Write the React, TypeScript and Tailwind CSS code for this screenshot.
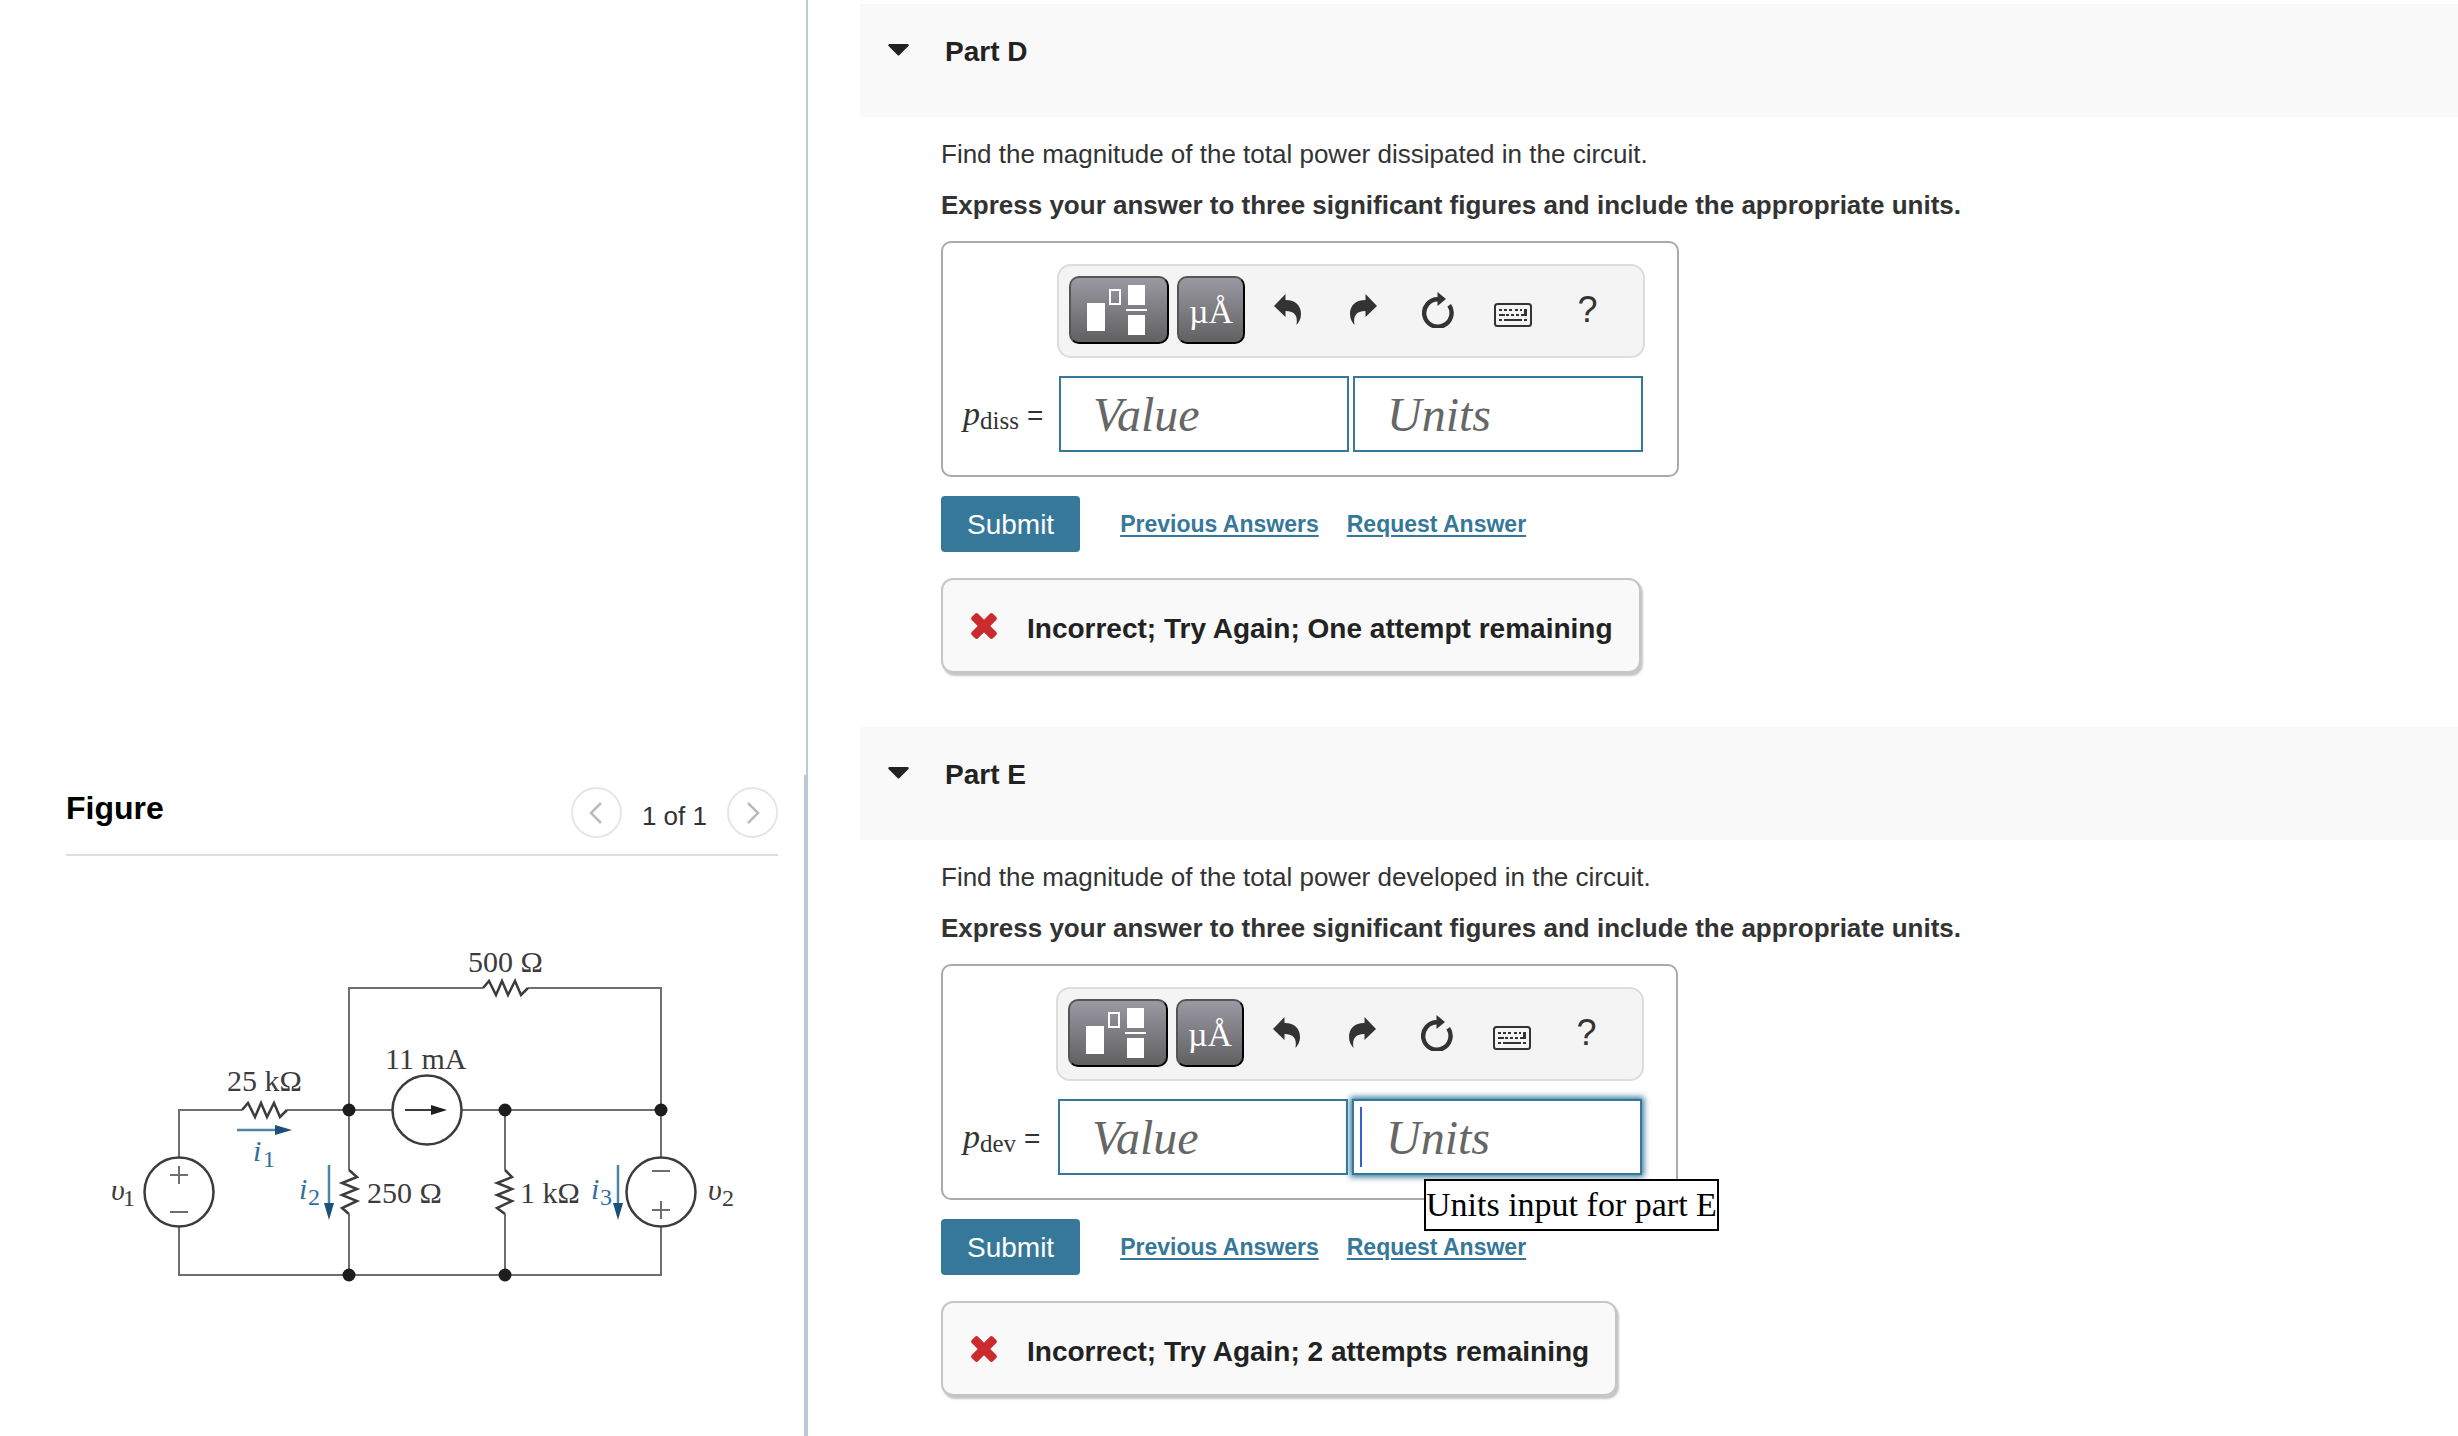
import { type FC, useState } from "react";

const SANS = "font-['Liberation_Sans',Arial,sans-serif]";
const SERIF = "font-['Liberation_Serif','Times_New_Roman',serif]";

const UndoIcon = () => (
  <svg width="28" height="32" viewBox="0 0 28 32" fill="#333">
    <path d="M0 12 L11.5 0 V6 C22 6 27 12 27 20 C27 25 25 28 22.5 31 C24 22 21 17 11.5 17 V23 Z" />
  </svg>
);

const RedoIcon = () => (
  <svg width="28" height="32" viewBox="0 0 28 32" fill="#333">
    <path d="M28 12 L16.5 0 V6 C6 6 1 12 1 20 C1 25 3 28 5.5 31 C4 22 7 17 16.5 17 V23 Z" />
  </svg>
);

const ResetIcon = () => (
  <svg width="32" height="36" viewBox="0 0 32 36">
    <path
      d="M27.2 13.3 A13.7 13.7 0 1 1 16 7.3"
      fill="none"
      stroke="#333"
      strokeWidth="4.4"
    />
    <path d="M15.5 0 L24 7 L15.5 14 Z" fill="#333" />
  </svg>
);

const KeyboardIcon = () => (
  <svg width="38" height="34" viewBox="0 -10 38 34" fill="#333">
    <rect
      x="1"
      y="1"
      width="36"
      height="22"
      rx="2.5"
      fill="none"
      stroke="#333"
      strokeWidth="2"
    />
    <path d="M5 6h3v2H5zM10 6h3v2h-3zM15 6h3v2h-3zM21 6h3v2h-3zM26 6h2v2h-2z" />
    <path d="M5 11h6v2H5zM12 11h3v2h-3zM17 11h3v2h-3zM22 11h3v2h-3zM27 11h3V6h3v7h-6z" />
    <path d="M5 16h3v2H5zM10 16h18v2H10zM30 16h3v2h-3z" />
  </svg>
);

const TemplatesIcon = () => (
  <svg width="64" height="52" viewBox="18 7 64 52" fill="#fff">
    <rect x="16" y="26" width="20" height="28" />
    <rect
      x="41"
      y="13"
      width="10"
      height="14"
      fill="none"
      stroke="#fff"
      strokeWidth="2"
    />
    <rect x="59" y="8" width="17" height="20" />
    <rect x="57" y="32" width="21" height="2" />
    <rect x="59" y="38" width="17" height="20" />
  </svg>
);

const WrongIcon = () => (
  <svg width="26" height="26" viewBox="-13 -13 26 26" fill="#cb2a2e">
    <rect x="-15" y="-4.5" width="30" height="9" rx="2.5" transform="rotate(45)" />
    <rect x="-15" y="-4.5" width="30" height="9" rx="2.5" transform="rotate(-45)" />
  </svg>
);

const Chevron: FC<{ d: string }> = ({ d }) => (
  <svg width="14" height="22" viewBox="0 0 14 22" fill="none">
    <path d={d} stroke="#bbb" strokeWidth="2.5" />
  </svg>
);

const CircuitFigure = () => (
  <svg
    viewBox="66 856 712 480"
    className={`w-full ${SERIF}`}
    role="img"
    aria-label="Circuit with two voltage sources, a current source and four resistors"
  >
    <g fill="none" stroke="#6e6e6e" strokeWidth="2">
      <path d="M179 1158 V1110 H242" />
      <path d="M287 1110 H392" />
      <path d="M462 1110 H661" />
      <path d="M349 1170 V988 H483" />
      <path d="M528 988 H661 V1158" />
      <path d="M179 1227 V1275 H661 V1227" />
      <path d="M349 1214 V1275" />
      <path d="M505 1110 V1170" />
      <path d="M505 1214 V1275" />
    </g>

    {/* resistors */}
    <g fill="none" stroke="#3c3c3c" strokeWidth="2.5">
      <path d="M242 1110 L248 1103 L255 1117 L261 1103 L267 1117 L274 1103 L280 1117 L287 1110" />
      <path d="M483 988 L489 981 L496 995 L502 981 L508 995 L515 981 L521 995 L528 988" />
      <path d="M349 1170 L357 1177 L342 1183 L357 1189 L342 1195 L357 1201 L342 1208 L349 1214" />
      <path d="M505 1170 L512 1177 L497 1183 L512 1189 L497 1195 L512 1201 L497 1208 L505 1214" />
    </g>

    {/* sources */}
    <g fill="none" stroke="#3c3c3c" strokeWidth="2.5">
      <circle cx="179" cy="1192" r="34.5" />
      <circle cx="427" cy="1110" r="34.5" />
      <circle cx="661" cy="1192" r="34.5" />
      <path d="M405 1110 H434" strokeWidth="2" />
    </g>
    <path d="M431 1105 L447 1110 L431 1115 Z" fill="#1f1c1d" />
    <g stroke="#6e6e6e" strokeWidth="2">
      <path d="M170 1175 H188 M179 1166 V1184 M170 1212 H188" />
      <path d="M652 1171 H670 M652 1210 H670 M661 1201 V1219" />
    </g>

    {/* nodes */}
    <g fill="#1f1c1d">
      <circle cx="349" cy="1110" r="6.5" />
      <circle cx="505" cy="1110" r="6.5" />
      <circle cx="661" cy="1110" r="6.5" />
      <circle cx="349" cy="1275" r="6.5" />
      <circle cx="505" cy="1275" r="6.5" />
    </g>

    {/* branch currents */}
    <g stroke="#4f86a6" strokeWidth="2.5">
      <path d="M237 1130 H276" />
      <path d="M329 1165 V1204" />
      <path d="M618 1165 V1204" />
    </g>
    <g fill="#1b5078">
      <path d="M275 1125 L292 1130 L275 1135 Z" />
      <path d="M324 1203 L329 1220 L334 1203 Z" />
      <path d="M613 1203 L618 1220 L623 1203 Z" />
    </g>

    <g fill="#3c3c3c" fontSize="30">
      <text x="227" y="1091">25 kΩ</text>
      <text x="385" y="1069">11 mA</text>
      <text x="468" y="972">500 Ω</text>
      <text x="367" y="1203">250 Ω</text>
      <text x="520" y="1203">1 kΩ</text>
      <text x="111" y="1200" fontStyle="italic">υ</text>
      <text x="123" y="1206" fontSize="24">1</text>
      <text x="708" y="1200" fontStyle="italic">υ</text>
      <text x="722" y="1206" fontSize="24">2</text>
    </g>
    <g fill="#2f6f99" fontSize="30">
      <text x="253" y="1161" fontStyle="italic">i</text>
      <text x="263" y="1167" fontSize="24">1</text>
      <text x="299" y="1199" fontStyle="italic">i</text>
      <text x="308" y="1205" fontSize="24">2</text>
      <text x="591" y="1199" fontStyle="italic">i</text>
      <text x="600" y="1205" fontSize="24">3</text>
    </g>
  </svg>
);

const NAV_BUTTON =
  "flex size-[51px] items-center justify-center rounded-full border-2 border-[#e6e6e6]";

const FigurePane = () => (
  <aside className="flex w-[808px] shrink-0 flex-col items-stretch">
    <div className="h-[54vh] border-r-2 border-[#bcc9db]" />
    <div className="flex-1 border-r-4 border-[#bcc9db] pt-3 pr-[26px] pl-[66px]">
      <div className="flex h-[69px] items-start justify-between border-b-2 border-[#ddd]">
        <h2 className="text-[32px] leading-[42px] font-bold text-black">Figure</h2>
        <div className="flex items-start">
          <button aria-label="Previous figure" className={NAV_BUTTON}>
            <Chevron d="M12 1 L2 11 L12 21" />
          </button>
          <span className="px-5 text-[26px] leading-[58px]">1 of 1</span>
          <button aria-label="Next figure" className={NAV_BUTTON}>
            <Chevron d="M2 1 L12 11 L2 21" />
          </button>
        </div>
      </div>
      <CircuitFigure />
    </div>
  </aside>
);

const GRAY_BUTTON =
  "flex h-[68px] items-center justify-center rounded-[10px] border-2 border-t-[#555] border-r-black border-b-black border-l-[#555] bg-linear-to-b from-[#9b99a3] to-[#616161]";
const ICON_BUTTON = "flex h-[68px] flex-1 items-center justify-center";

const Toolbar = () => (
  <div className="flex rounded-[14px] border-2 border-[#ddd] bg-[#f4f4f4] pt-[10px] pr-[18px] pb-3 pl-[10px]">
    <button aria-label="Templates" className={`${GRAY_BUTTON} w-[100px]`}>
      <TemplatesIcon />
    </button>
    <button
      aria-label="Symbols"
      className={`${GRAY_BUTTON} ${SERIF} ml-2 w-[68px] pt-1 text-[34px] leading-none text-white`}
    >
      µÅ
    </button>
    <div className="ml-[6px] flex flex-1">
      <button aria-label="Undo" className={ICON_BUTTON}>
        <UndoIcon />
      </button>
      <button aria-label="Redo" className={ICON_BUTTON}>
        <RedoIcon />
      </button>
      <button aria-label="Reset" className={ICON_BUTTON}>
        <ResetIcon />
      </button>
      <button aria-label="Keyboard shortcuts" className={ICON_BUTTON}>
        <KeyboardIcon />
      </button>
      <button aria-label="Help" className={`${ICON_BUTTON} text-[36px]`}>
        ?
      </button>
    </div>
  </div>
);

const INPUT = `${SERIF} h-[76px] w-full min-w-0 border-2 border-[#36789a] bg-white pl-8 text-[48px] italic outline-none placeholder:text-[#666] placeholder:opacity-100`;
const LINK = "underline decoration-2 underline-offset-3";

type PartProps = {
  part: string;
  verb: string;
  symbol: string;
  feedback: string;
  unitsFocused?: boolean;
};

const Part: FC<PartProps> = ({
  part,
  verb,
  symbol,
  feedback,
  unitsFocused = false,
}) => {
  const [value, setValue] = useState("");
  const [units, setUnits] = useState("");
  const id = `value-${part}`;

  return (
    <section>
      <header className="flex h-[113px] items-start bg-[#f9f9f9] pt-[30px] pl-7">
        <button aria-label={`Collapse Part ${part}`} className="flex h-8 items-center">
          <svg width="21" height="12" viewBox="0 0 21 12" fill="#222">
            <path d="M1.5 0 H19.5 Q21.5 0.5 20.5 2 L11.5 11 Q10.5 12 9.500 11 L0.5 2 Q-0.5 0.5 1.5 0 Z" />
          </svg>
        </button>
        <h3 className="ml-9 text-[28px] leading-9 font-bold text-[#222]">
          Part {part}
        </h3>
      </header>

      <div className="pt-[22px] pl-[81px]">
        <p className="text-[26px] leading-[30px]">
          Find the magnitude of the total power {verb} in the circuit.
        </p>
        <p className="mt-[21px] text-[26px] leading-[30px] font-bold">
          Express your answer to three significant figures and include the
          appropriate units.
        </p>

        <div className="mt-[21px] flex w-fit items-end rounded-[10px] border-2 border-[#aaa] pt-[21px] pr-8 pb-[23px] pl-5">
          <label
            htmlFor={id}
            className={`${SERIF} ${
              unitsFocused ? "w-[93px]" : "w-[94px]"
            } flex h-[76px] items-center text-[34px] leading-none whitespace-nowrap`}
          >
            <i>p</i>
            <span className="pt-3 text-[25px]">{symbol}</span>
            <span className={`${SANS} ml-2 pt-1 text-[28px]`}>=</span>
          </label>
          <div className="w-[588px]">
            <Toolbar />
            <div className="mt-[18px] grid grid-cols-2 gap-1 px-[2px]">
              <input
                id={id}
                value={value}
                placeholder="Value"
                onChange={(e) => setValue(e.target.value)}
                className={INPUT}
              />
              <div className="relative">
                <input
                  aria-label={`Units input for part ${part}`}
                  value={units}
                  placeholder="Units"
                  onChange={(e) => setUnits(e.target.value)}
                  className={`${INPUT} ${
                    unitsFocused ? "shadow-[0_0_6px_2px_#36789a]" : ""
                  }`}
                />
                {unitsFocused && (
                  <>
                    <span className="absolute top-2 left-2 h-[60px] w-[2px] bg-[#3a5fcd]" />
                    <span
                      role="tooltip"
                      className={`${SERIF} absolute top-[80px] left-[72px] z-10 border-2 border-black bg-white text-[34px] leading-[48px] whitespace-nowrap text-black`}
                    >
                      Units input for part {part}
                    </span>
                  </>
                )}
              </div>
            </div>
          </div>
        </div>

        <div className="mt-[19px] flex items-center text-[23px] font-bold text-[#36789a]">
          <button className="mr-10 h-14 rounded-[4px] bg-[#36789a] px-[26px] pt-[2px] text-[28px] font-normal text-white">
            Submit
          </button>
          <a href="#previous" className={`${LINK} mr-7`}>
            Previous Answers
          </a>
          <a href="#request" className={LINK}>
            Request Answer
          </a>
        </div>

        <div className="mt-[26px] flex h-[95px] w-fit items-center rounded-[12px] border-2 border-[#c6c6c6] bg-[#f9f9f9] pr-[26px] pl-7 text-[28px] font-bold text-[#222] shadow-[2px_3px_2px_#c6c6c6]">
          <WrongIcon />
          <span className="ml-[30px] pt-[6px]">{feedback}</span>
        </div>
      </div>
    </section>
  );
};

export default function App() {
  return (
    <div className={`${SANS} flex min-h-screen bg-white text-[#333]`}>
      <FigurePane />
      <main className="flex min-w-0 flex-1 flex-col gap-[54px] pt-1 pl-[52px]">
        <Part
          part="D"
          verb="dissipated"
          symbol="diss"
          feedback="Incorrect; Try Again; One attempt remaining"
        />
        <Part
          part="E"
          verb="developed"
          symbol="dev"
          feedback="Incorrect; Try Again; 2 attempts remaining"
          unitsFocused
        />
      </main>
    </div>
  );
}
